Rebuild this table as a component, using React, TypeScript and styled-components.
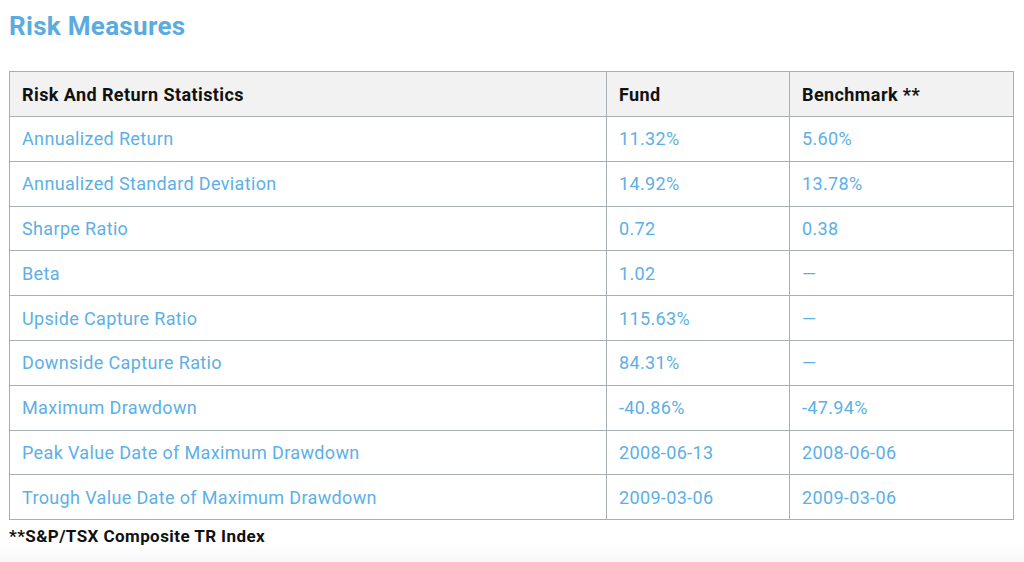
import React from "react";
import styled, { createGlobalStyle } from "styled-components";

const Global = createGlobalStyle`
  html, body { margin: 0; padding: 0; background: #fff; }
  body { font-family: Roboto, "Noto Sans", sans-serif; }
`;

const Page = styled.div`
  width: 1024px;
  height: 562px;
  box-sizing: border-box;
  padding: 9px 10px 0 9px;
  background: linear-gradient(to bottom, #fff 0, #fff 545px, #f6f6f6 562px);
  display: flex;
  flex-direction: column;
`;

const Title = styled.h2`
  margin: 0;
  font-size: 26px;
  line-height: 34px;
  font-weight: 700;
  color: #5aabe0;
  letter-spacing: 0.3px;
`;

const Table = styled.table`
  margin-top: 28px;
  width: 1005px;
  border-collapse: collapse;
  table-layout: fixed;
  font-size: 18px;
  letter-spacing: 0.35px;
`;

const HeadCell = styled.th<{ $w?: number }>`
  ${(p) => (p.$w ? `width: ${p.$w}px;` : "")}
  box-sizing: border-box;
  height: 45px;
  padding: 0 12px;
  text-align: left;
  font-weight: 700;
  letter-spacing: 0.42px;
  color: #111;
  background: #f2f2f2;
  border: 1px solid #a9aeb2;
`;

const Cell = styled.td`
  box-sizing: border-box;
  height: 44.8px;
  padding: 0 12px;
  color: #5cb0e6;
  font-weight: 400;
  border: 1px solid #a9aeb2;
`;

const Footnote = styled.div`
  margin-top: 6px;
  font-size: 17px;
  letter-spacing: 0.42px;
  font-weight: 700;
  color: #111;
`;

const rows: [string, string, string][] = [
  ["Annualized Return", "11.32%", "5.60%"],
  ["Annualized Standard Deviation", "14.92%", "13.78%"],
  ["Sharpe Ratio", "0.72", "0.38"],
  ["Beta", "1.02", "—"],
  ["Upside Capture Ratio", "115.63%", "—"],
  ["Downside Capture Ratio", "84.31%", "—"],
  ["Maximum Drawdown", "-40.86%", "-47.94%"],
  ["Peak Value Date of Maximum Drawdown", "2008-06-13", "2008-06-06"],
  ["Trough Value Date of Maximum Drawdown", "2009-03-06", "2009-03-06"],
];

export default function App() {
  return (
    <Page>
      <Global />
      <Title>Risk Measures</Title>
      <Table>
        <thead>
          <tr>
            <HeadCell $w={597}>Risk And Return Statistics</HeadCell>
            <HeadCell $w={183}>Fund</HeadCell>
            <HeadCell>Benchmark **</HeadCell>
          </tr>
        </thead>
        <tbody>
          {rows.map((r) => (
            <tr key={r[0]}>
              <Cell>{r[0]}</Cell>
              <Cell>{r[1]}</Cell>
              <Cell>{r[2]}</Cell>
            </tr>
          ))}
        </tbody>
      </Table>
      <Footnote>**S&amp;P/TSX Composite TR Index</Footnote>
    </Page>
  );
}
